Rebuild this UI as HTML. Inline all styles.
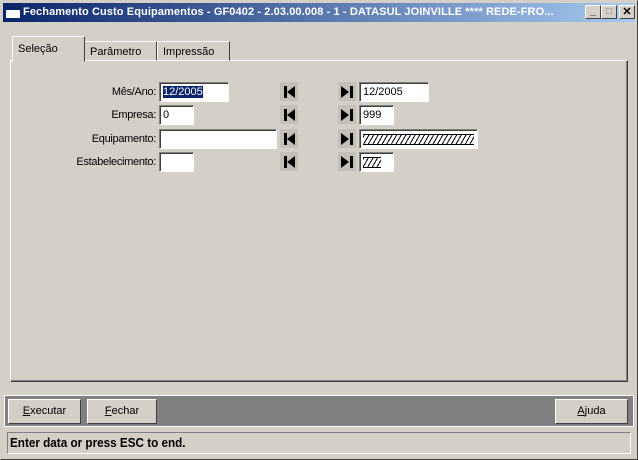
<html><head><style>
body{margin:0;width:638px;height:460px;background:#d4d0c8;font-family:"Liberation Sans",sans-serif;font-size:11px;position:relative;overflow:hidden}
.a{position:absolute}
.in{position:absolute;background:#fff;border-top:1px solid #808080;border-left:1px solid #808080;border-bottom:1px solid #fff;border-right:1px solid #fff;box-shadow:inset 1px 1px 0 #404040;box-sizing:border-box;height:20px;padding:2px 3px;font-size:11px;line-height:14px}
.lb{position:absolute;right:482px;font-size:11px;color:#000;letter-spacing:-0.3px}
.btn{position:absolute;height:23px;box-sizing:border-box;border:1px solid;border-color:#fff #404040 #404040 #fff;background:#d4d0c8;text-align:center;line-height:21px;font-size:11px}
.hatch{background:repeating-linear-gradient(-60deg,#fff 0 3px,#000 3px 4px)}
</style></head><body>
<div class="a" style="left:0;top:0;width:638px;height:460px;box-sizing:border-box;border:1px solid;border-color:#d4d0c8 #404040 #404040 #d4d0c8"></div>
<div class="a" style="left:3px;top:3px;width:632px;height:19px;background:linear-gradient(90deg,#0a246a,#a6caf0)"></div>
<div class="a" style="left:6px;top:7px;width:14px;height:11px;background:#fff;border-top:3px solid #0a246a;box-sizing:border-box"></div>
<div class="a" style="left:23px;top:4px;color:#fff;font-weight:bold;font-size:11px;line-height:17px;white-space:nowrap;letter-spacing:0.1px">Fechamento Custo Equipamentos - GF0402 - 2.03.00.008 - 1 - DATASUL JOINVILLE **** REDE-FRO...</div>
<div class="btn" style="left:585px;top:5px;width:16px;height:14px;line-height:12px;font-size:10px;font-weight:bold">_</div>
<div class="btn" style="left:601px;top:5px;width:16px;height:14px;line-height:12px;font-size:10px;color:#808080">□</div>
<div class="btn" style="left:619px;top:5px;width:16px;height:14px;line-height:12px;font-size:11px;font-weight:bold">✕</div>
<div class="a" style="left:10px;top:60px;width:618px;height:322px;box-sizing:border-box;border:1px solid;border-color:#fff #404040 #404040 #fff;box-shadow:inset -1px -1px 0 #808080"></div>
<div class="a" style="left:84px;top:41px;width:73px;height:20px;box-sizing:border-box;border:1px solid;border-color:#fff #404040 transparent #fff;padding:4px 0 0 5px">Parâmetro</div>
<div class="a" style="left:157px;top:41px;width:73px;height:20px;box-sizing:border-box;border:1px solid;border-color:#fff #404040 transparent #fff;padding:4px 0 0 5px">Impressão</div>
<div class="a" style="left:12px;top:36px;width:73px;height:26px;box-sizing:border-box;border:1px solid;border-color:#fff #404040 transparent #fff;background:#d4d0c8;padding:6px 0 0 5px">Seleção</div>
<div class="lb" style="top:86px">Mês/Ano:</div>
<div class="lb" style="top:109px">Empresa:</div>
<div class="lb" style="top:133px">Equipamento:</div>
<div class="lb" style="top:156px">Estabelecimento:</div>
<div class="in" style="left:159px;top:82px;width:70px"><span style="background:#0a246a;color:#fff">12/2005</span></div>
<div class="in" style="left:159px;top:105px;width:35px">0</div>
<div class="in" style="left:159px;top:129px;width:118px"></div>
<div class="in" style="left:159px;top:152px;width:35px"></div>
<div class="in" style="left:359px;top:82px;width:70px">12/2005</div>
<div class="in" style="left:359px;top:105px;width:35px">999</div>
<div class="in" style="left:359px;top:129px;width:119px;padding:4px 3px"><div class="hatch" style="height:9px;border-top:1px solid #000;border-bottom:1px solid #000"></div></div>
<div class="in" style="left:359px;top:152px;width:35px;padding:4px 3px"><div class="hatch" style="height:9px;border-top:1px solid #000;border-bottom:1px solid #000;width:18px"></div></div>
<svg class="a" style="left:280px;top:82px" width="20" height="100">
<defs><g id="l"><rect x="0" y="0" width="18" height="19" fill="#c4c0b8"/><rect x="4" y="4" width="3" height="12" fill="#000"/><path d="M15 4 L7 10 L15 16Z" fill="#000"/></g></defs>
<use href="#l"/><use href="#l" y="23"/><use href="#l" y="47"/><use href="#l" y="70"/></svg>
<svg class="a" style="left:338px;top:82px" width="20" height="100">
<defs><g id="r"><rect x="0" y="0" width="18" height="19" fill="#c4c0b8"/><path d="M3 4 L11 10 L3 16Z" fill="#000"/><rect x="12" y="4" width="3" height="12" fill="#000"/></g></defs>
<use href="#r"/><use href="#r" y="23"/><use href="#r" y="47"/><use href="#r" y="70"/></svg>
<div class="a" style="left:4px;top:395px;width:630px;height:32px;box-sizing:border-box;border:1px solid #fff;background:#808080"></div>
<div class="btn" style="left:8px;top:399px;width:73px;height:25px;line-height:23px"><u>E</u>xecutar</div>
<div class="btn" style="left:87px;top:399px;width:70px;height:25px;line-height:23px"><u>F</u>echar</div>
<div class="btn" style="left:555px;top:399px;width:73px;height:25px;line-height:23px"><u>A</u>juda</div>
<div class="a" style="left:7px;top:432px;width:624px;height:22px;box-sizing:border-box;border:1px solid;border-color:#808080 #fff #fff #808080;font-weight:bold;font-size:13px;line-height:20px;padding-left:2px"><span style="display:inline-block;transform:scaleX(0.9);transform-origin:left">Enter data or press ESC to end.</span></div>
</body></html>
